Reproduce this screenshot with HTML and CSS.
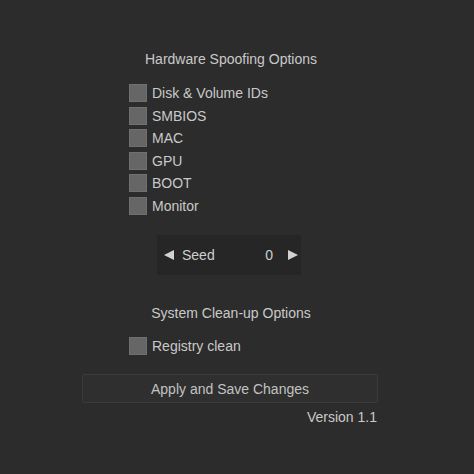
FILE: index.html
```html
<!DOCTYPE html>
<html>
<head>
<meta charset="utf-8">
<link rel="stylesheet" href="styles.css">
</head>
<body>
<div class="panel">
  <div class="title">Hardware Spoofing Options</div>
  <div class="checks">
    <label class="check"><span class="box"></span><span>Disk &amp; Volume IDs</span></label>
    <label class="check"><span class="box"></span><span>SMBIOS</span></label>
    <label class="check"><span class="box"></span><span>MAC</span></label>
    <label class="check"><span class="box"></span><span>GPU</span></label>
    <label class="check"><span class="box"></span><span>BOOT</span></label>
    <label class="check"><span class="box"></span><span>Monitor</span></label>
  </div>
  <div class="seed">
    <svg class="arrow" width="10" height="10" viewBox="0 0 10 10"><polygon points="10,0 10,10 0,5" fill="#d2d2d2"/></svg>
    <span class="seed-label">Seed</span>
    <span class="seed-value">0</span>
    <svg class="arrow" width="10" height="10" viewBox="0 0 10 10"><polygon points="0,0 0,10 10,5" fill="#d2d2d2"/></svg>
  </div>
  <div class="title title2">System Clean-up Options</div>
  <div class="checks checks2">
    <label class="check"><span class="box"></span><span>Registry clean</span></label>
  </div>
  <div class="button">Apply and Save Changes</div>
  <div class="version">Version 1.1</div>
</div>
</body>
</html>
```
FILE: styles.css
```css
html, body {
  margin: 0;
  padding: 0;
  background: #2c2c2c;
  width: 474px;
  height: 474px;
  overflow: hidden;
}
body {
  font-family: "Liberation Sans", Arial, sans-serif;
  font-size: 14px;
  color: #c9c9c9;
}
.panel {
  margin-left: 82px;
  width: 296px;
  padding-top: 51px;
  display: flex;
  flex-direction: column;
}
.title {
  line-height: 16px;
  height: 16px;
  text-align: center;
  padding-left: 2px;
}
.checks {
  margin-top: 17px;
  padding-left: 47px;
  display: flex;
  flex-direction: column;
  gap: 4.5px;
}
.check {
  display: flex;
  align-items: center;
  gap: 5px;
  height: 18px;
  line-height: 18px;
}
.box {
  width: 16px;
  height: 16px;
  background: #666666;
  border: 1px solid #707070;
  flex: none;
}
.seed {
  margin-top: 20.5px;
  margin-left: 75px;
  width: 144px;
  height: 40px;
  background: #262626;
  display: flex;
  align-items: center;
  padding: 0 3px 0 7px;
  box-sizing: border-box;
  color: #cfcfcf;
}
.seed-label {
  margin-left: 8px;
  flex: 1;
}
.seed-value {
  margin-right: 15px;
}
.arrow {
  flex: none;
}
.title2 {
  margin-top: 29.5px;
}
.checks2 {
  margin-top: 16.5px;
}
.button {
  margin-top: 19px;
  height: 29px;
  box-sizing: border-box;
  border: 1px solid #3b3b3b;
  border-radius: 2px;
  background: #2f2f2f;
  display: flex;
  align-items: center;
  justify-content: center;
  color: #c2c2c2;
}
.version {
  margin-top: 6px;
  line-height: 16px;
  text-align: right;
  padding-right: 1px;
}
```
